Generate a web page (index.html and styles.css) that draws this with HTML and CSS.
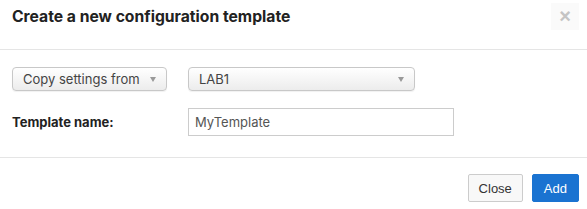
FILE: index.html
```html
<!DOCTYPE html>
<html lang="en">
<head>
    <meta charset="UTF-8">
    <title>Create a new configuration template</title>
    <link rel="stylesheet" href="styles.css">
</head>
<body>
    <div class="modal">
        <div class="modal-header">
            <h3 class="modal-title">Create a new configuration template</h3>
            <button class="close-x">&times;</button>
        </div>

        <div class="modal-body">
            <div class="form-row">
                <div class="select select-copy">
                    <span>Copy settings from</span>
                    <span class="caret"></span>
                </div>
                <div class="select select-source">
                    <span>LAB1</span>
                    <span class="caret"></span>
                </div>
            </div>
            <div class="form-row">
                <label class="field-label">Template name:</label>
                <input class="text-input" type="text" value="MyTemplate">
            </div>
        </div>

        <div class="modal-footer">
            <button class="btn">Close</button>
            <button class="btn btn-primary">Add</button>
        </div>
    </div>
</body>
</html>
```

FILE: styles.css
```css
* {
    margin: 0;
    padding: 0;
    box-sizing: border-box;
}

body {
    font-family: Inter, 'Liberation Sans', sans-serif;
    font-size: 13px;
    color: #333;
    background: white;
}

.modal {
    width: 587px;
}

.modal-header {
    height: 50px;
    display: flex;
    align-items: flex-start;
    justify-content: space-between;
    padding: 3px 8px 0 12px;
    border-bottom: 1px solid #e5e5e5;
}

.modal-title {
    font-size: 15.7px;
    font-weight: 700;
    color: #222;
    margin-top: 4px;
}

.close-x {
    width: 28px;
    height: 27px;
    border: none;
    background: #fafafa;
    color: #c4c4c4;
    font-size: 20px;
    font-weight: bold;
    line-height: 27px;
    font-family: 'Liberation Sans', sans-serif;
}

.modal-body {
    height: 108px;
    padding: 17px 12px 0;
    border-bottom: 1px solid #e5e5e5;
}

.form-row {
    display: flex;
    align-items: center;
    gap: 21px;
    margin-bottom: 17px;
}

.select {
    height: 24px;
    display: flex;
    align-items: center;
    justify-content: space-between;
    padding: 0 10px 0 10px;
    border: 1px solid #c8c8c8;
    border-radius: 4px;
    background: linear-gradient(#ffffff, #ececec);
    box-shadow: 0 1px 1px rgba(0,0,0,0.06);
    color: #444;
}

.select-copy {
    width: 155px;
}

.select-source {
    width: 227px;
}

.caret {
    width: 0;
    height: 0;
    border-left: 3.5px solid transparent;
    border-right: 3.5px solid transparent;
    border-top: 5px solid #999;
}

.field-label {
    width: 155px;
    font-weight: 700;
    color: #222;
}

.text-input {
    width: 266px;
    height: 28px;
    border: 1px solid #ccc;
    padding: 0 6px;
    font-family: Inter, 'Liberation Sans', sans-serif;
    font-size: 13px;
    color: #555;
}

.modal-footer {
    display: flex;
    justify-content: flex-end;
    gap: 9px;
    padding: 16px 8px 0;
}

.btn {
    height: 28px;
    padding: 0 10px;
    border: 1px solid #ccc;
    border-radius: 2px;
    background: #f8f8f8;
    color: #333;
    font-family: 'Liberation Sans', sans-serif;
    font-size: 13px;
}

.btn-primary {
    background: #1a73d1;
    border-color: #1a73d1;
    color: white;
    padding: 0 11px;
}
```
